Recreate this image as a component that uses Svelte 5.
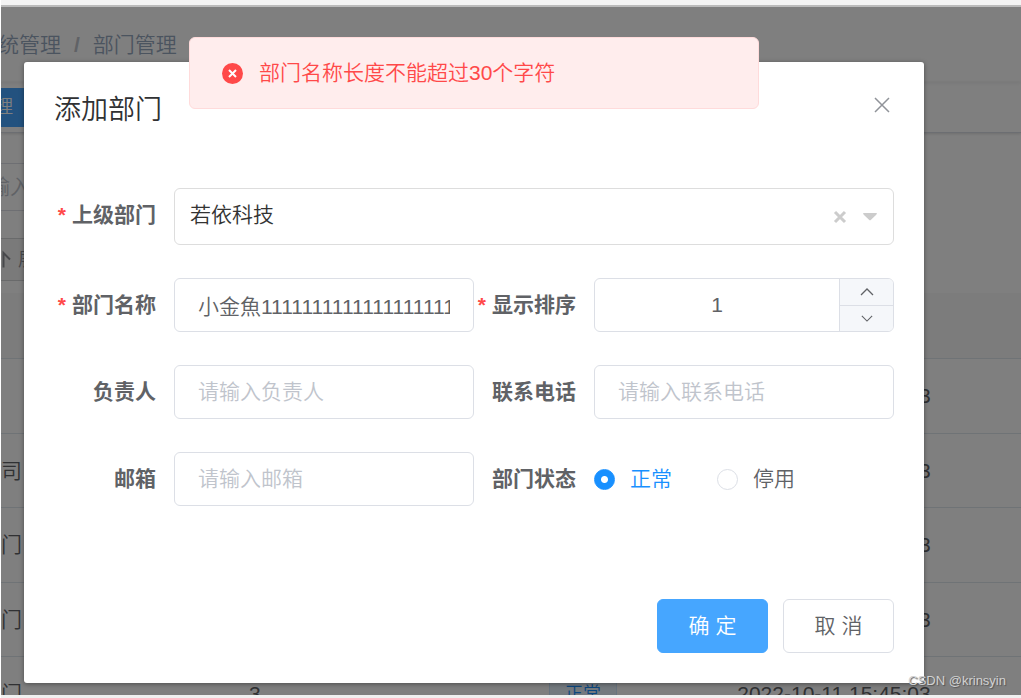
<script lang="ts">
	type Row = { name?: string; order?: number; status?: string; created: string };

	const rows: Row[] = [
		{ created: '2022-10-11 15:45:03' },
		{ name: '司', created: '2022-10-11 15:45:03' },
		{ name: '门', created: '2022-10-11 15:45:03' },
		{ name: '门', created: '2022-10-11 15:45:03' },
		{ name: '门', order: 3, status: '正常', created: '2022-10-11 15:45:03' }
	];

	let form = $state({
		parent: '若依科技',
		name: '小金魚' + '1'.repeat(28),
		order: 1,
		leader: '',
		phone: '',
		email: '',
		status: '0'
	});
</script>

<div class="window">
	<div class="browser-edge"></div>
	<div class="app">
		<div class="page">
			<nav class="navbar">
				<a href="#system">统管理</a>
				<span class="slash">/</span>
				<a href="#dept">部门管理</a>
			</nav>
			<div class="tags-view">
				<a href="#dept" class="view-tag">理</a>
			</div>
			<div class="filter">
				<span class="filter-input">输入</span>
			</div>
			<div class="tools">
				<button type="button" class="expand">
					<svg viewBox="0 0 10 20" width="10" height="20">
						<path d="M2.500 17.500V3l6.500 6.500" />
					</svg>
					展
				</button>
			</div>
			<table>
				<colgroup>
					<col class="col-name" />
					<col class="col-order" />
					<col class="col-status" />
					<col class="col-time" />
					<col />
				</colgroup>
				<thead>
					<tr><th></th><th></th><th></th><th></th><th></th></tr>
				</thead>
				<tbody>
					{#each rows as row}
						<tr>
							<td class="name">{row.name}</td>
							<td>{row.order}</td>
							<td>
								{#if row.status}
									<span class="status">{row.status}</span>
								{/if}
							</td>
							<td class="time">{row.created}</td>
							<td></td>
						</tr>
					{/each}
				</tbody>
			</table>
		</div>

		<div class="overlay">
			<div class="dialog" role="dialog" aria-labelledby="dialog-title">
				<header class="dialog-header">
					<h1 id="dialog-title">添加部门</h1>
					<button type="button" class="close" aria-label="关闭">
						<svg viewBox="0 0 16 16" width="16" height="16">
							<path d="M1 1l14 14M15 1L1 15" />
						</svg>
					</button>
				</header>

				<form id="dept-form" class="dialog-body">
					<div class="item wide">
						<label class="required" for="parent">上级部门</label>
						<div class="tree-select">
							<select id="parent" bind:value={form.parent}>
								<option>若依科技</option>
							</select>
							<div class="select-icons">
								<svg viewBox="0 0 14 14" width="14" height="14">
									<path class="cross" d="M2 2l10 10M12 2l-10 10" />
								</svg>
								<svg viewBox="0 0 14 8" width="14" height="8">
									<path class="caret" d="M0 0.500Q0 0 1 0H13Q14 0 14 0.500Q14 1.200 8 6.800Q7 7.800 6 6.800Q0 1.200 0 0.500Z" />
								</svg>
							</div>
						</div>
					</div>
					<div class="item">
						<label class="required" for="name">部门名称</label>
						<input id="name" type="text" bind:value={form.name} />
					</div>
					<div class="item">
						<label class="required" for="order">显示排序</label>
						<div class="number">
							<input id="order" type="number" bind:value={form.order} />
							<div class="steps">
								<button type="button" aria-label="增加" onclick={() => form.order++}>
									<svg viewBox="0 0 14 8" width="14" height="8"><path d="M1 7l6-6 6 6" /></svg>
								</button>
								<button type="button" aria-label="减少" onclick={() => form.order--}>
									<svg viewBox="0 0 14 8" width="12" height="7"><path d="M1 1l6 6 6-6" /></svg>
								</button>
							</div>
						</div>
					</div>
					<div class="item">
						<label for="leader">负责人</label>
						<input id="leader" type="text" placeholder="请输入负责人" bind:value={form.leader} />
					</div>
					<div class="item">
						<label for="phone">联系电话</label>
						<input id="phone" type="text" placeholder="请输入联系电话" bind:value={form.phone} />
					</div>
					<div class="item">
						<label for="email">邮箱</label>
						<input id="email" type="text" placeholder="请输入邮箱" bind:value={form.email} />
					</div>
					<div class="item" role="radiogroup" aria-labelledby="status-label">
						<span class="label" id="status-label">部门状态</span>
						<div class="radios">
							<label class="radio">
								<input type="radio" name="status" value="0" bind:group={form.status} />
								<span>正常</span>
							</label>
							<label class="radio">
								<input type="radio" name="status" value="1" bind:group={form.status} />
								<span>停用</span>
							</label>
						</div>
					</div>
				</form>

				<footer class="dialog-footer">
					<button type="submit" form="dept-form" class="btn primary">确 定</button>
					<button type="button" class="btn">取 消</button>
				</footer>
			</div>
		</div>

		<div class="message" role="alert">
			<svg viewBox="0 0 21 21" width="21" height="21">
				<circle cx="10.500" cy="10.500" r="10.500" />
				<path d="M7 7l7 7M14 7l-7 7" />
			</svg>
			<p>部门名称长度不能超过30个字符</p>
		</div>
	</div>
	<div class="watermark">CSDN @krinsyin</div>
</div>

<style>
	:global(body) {
		margin: 0;
		background: #f0f0f0;
	}

	.window,
	.window * {
		box-sizing: border-box;
	}

	.window {
		position: relative;
		display: flex;
		flex-direction: column;
		height: 100vh;
		padding: 0 0 3px 1px;
		overflow: hidden;
		background: linear-gradient(to right, #fff 1px, #f0f0f0 1px);
		font-family: 'Liberation Sans', 'Noto Sans CJK SC', sans-serif;
		font-size: 21px;
		font-weight: 350;
		line-height: 24px;
		color: #606266;
	}

	.window input,
	.window select,
	.window button {
		margin: 0;
		font: inherit;
		color: inherit;
	}

	.browser-edge {
		flex: none;
		height: 7px;
		background: #f3f3f3;
		border-bottom: 2px solid #bbb;
	}

	.app {
		position: relative;
		flex: 1;
		min-height: 0;
		overflow: hidden;
		background: #fff;
	}

	a {
		color: inherit;
		text-decoration: none;
	}

	.navbar {
		display: flex;
		align-items: center;
		height: 75px;
		margin-left: -3px;
		color: #97a8be;
		box-shadow: 0 1px 4px rgba(0, 21, 41, 0.08);
	}

	.slash {
		margin: 0 13px;
		font-weight: 700;
		color: #c0c4cc;
	}

	.tags-view {
		display: flex;
		align-items: center;
		height: 51px;
		border-bottom: 1px solid #d8dce5;
		box-shadow: 0 1px 3px rgba(0, 0, 0, 0.12), 0 0 3px rgba(0, 0, 0, 0.04);
	}

	.view-tag {
		width: 32px;
		height: 39px;
		margin-left: -6px;
		background: #46a4ff;
		color: #fff;
		font-size: 18px;
		line-height: 39px;
	}

	.filter {
		padding-top: 30px;
	}

	.filter-input {
		display: block;
		width: 300px;
		height: 48px;
		border: 1px solid #dcdfe6;
		border-left: 0;
		color: #c0c4cc;
		line-height: 46px;
		text-indent: -12px;
	}

	.tools {
		padding: 27px 0 12px;
	}

	.expand {
		display: flex;
		align-items: center;
		gap: 7px;
		width: 80px;
		height: 43px;
		padding: 0;
		border: 1px solid #d3d4d6;
		border-left: 0;
		background: #f4f4f5;
	}

	.window .expand {
		color: #909399;
		font-size: 18px;
	}

	.expand path {
		fill: none;
		stroke: #909399;
		stroke-width: 2;
	}

	table {
		width: 100%;
		border-collapse: separate;
		border-spacing: 0;
		table-layout: fixed;
	}

	.col-name {
		width: 233px;
	}

	.col-order,
	.col-time {
		width: 300px;
	}

	.col-status {
		width: 150px;
	}

	th {
		height: 66px;
		background: #f8f8f9;
	}

	th,
	td {
		padding: 0 15px;
		border-bottom: 1px solid #dfe6ec;
	}

	td {
		height: 75px;
	}

	tr:nth-child(even) td {
		height: 74px;
	}

	td.name {
		padding: 0;
	}

	td.time {
		padding: 0;
		text-align: center;
	}

	.status {
		display: inline-block;
		height: 36px;
		padding: 0 15px;
		border: 1px solid #d1e9ff;
		border-radius: 6px;
		background: #e8f4ff;
		color: #1890ff;
		font-size: 18px;
		line-height: 34px;
		vertical-align: middle;
	}

	.overlay {
		position: absolute;
		inset: 0;
		padding: 55px 97px 0 23px;
		background: rgba(0, 0, 0, 0.5);
	}

	.dialog {
		border-radius: 3px;
		background: #fff;
		box-shadow: 0 1px 5px rgba(0, 0, 0, 0.4);
	}

	.dialog-header {
		display: flex;
		align-items: flex-start;
		justify-content: space-between;
		padding: 30px 30px 15px;
	}

	h1 {
		margin: 0;
		color: #303133;
		font-size: 27px;
		font-weight: inherit;
		line-height: 36px;
	}

	.close {
		display: flex;
		padding: 5px 4px;
		border: 0;
		background: none;
	}

	.close path {
		fill: none;
		stroke: #909399;
		stroke-width: 1.500;
	}

	.dialog-body {
		display: grid;
		grid-template-columns: 1fr 1fr;
		row-gap: 33px;
		padding: 45px 30px 78px;
	}

	.item {
		display: flex;
		min-width: 0;
	}

	.wide {
		grid-column: 1 / -1;
	}

	.item > label,
	.label {
		flex: none;
		width: 120px;
		padding-right: 18px;
		font-weight: 700;
		line-height: 54px;
		text-align: right;
		white-space: nowrap;
	}

	.required::before {
		content: '*';
		margin-right: 6px;
		color: #ff4949;
	}

	.item > input,
	.number,
	.tree-select {
		flex: 1;
		min-width: 0;
		height: 54px;
		border: 1px solid #dcdfe6;
		border-radius: 6px;
		background: #fff;
	}

	.item > input {
		padding: 0 23px;
	}

	input::placeholder {
		color: #c0c4cc;
		opacity: 1;
	}

	.tree-select {
		position: relative;
		height: 57px;
		border-color: #ddd;
	}

	.tree-select select {
		width: 100%;
		height: 52px;
		padding: 0 60px 0 15px;
		border: 0;
		appearance: none;
		background: none;
		color: #333;
	}

	.select-icons {
		position: absolute;
		top: 0;
		right: 16px;
		bottom: 0;
		display: flex;
		align-items: center;
		gap: 16px;
		pointer-events: none;
	}

	.cross {
		fill: none;
		stroke: #ccc;
		stroke-width: 3;
	}

	.caret {
		fill: #ccc;
	}

	.number {
		display: flex;
		overflow: hidden;
	}

	.number input {
		flex: 1;
		min-width: 0;
		padding: 0;
		border: 0;
		background: none;
		text-align: center;
		appearance: textfield;
	}

	.number input::-webkit-inner-spin-button {
		display: none;
	}

	.steps {
		display: grid;
		grid-template-rows: 27px 1fr;
		width: 54px;
		border-left: 1px solid #dcdfe6;
	}

	.steps button {
		display: flex;
		align-items: center;
		justify-content: center;
		padding: 0;
		border: 0;
		background: #f5f7fa;
	}

	.steps button:first-child {
		border-bottom: 1px solid #dcdfe6;
	}

	.steps path {
		fill: none;
		stroke: #606266;
		stroke-width: 1.300;
	}

	.radios {
		display: flex;
		align-items: center;
		gap: 45px;
	}

	.radio {
		display: flex;
		align-items: center;
		gap: 15px;
	}

	.radio input {
		appearance: none;
		width: 21px;
		height: 21px;
		border: 1px solid #dcdfe6;
		border-radius: 50%;
		background: #fff;
	}

	.radio input:checked {
		border-color: #1890ff;
		background: radial-gradient(circle, #fff 3px, #1890ff 4px);
	}

	.radio input:checked + span {
		color: #1890ff;
	}

	.dialog-footer {
		display: flex;
		justify-content: flex-end;
		gap: 15px;
		padding: 15px 30px 30px;
	}

	.btn {
		min-width: 111px;
		height: 54px;
		padding: 0 30px;
		border: 1px solid #dcdfe6;
		border-radius: 6px;
		background: #fff;
	}

	.window .primary {
		border-color: #46a6ff;
		background: #46a6ff;
		color: #fff;
	}

	.message {
		position: absolute;
		top: 30px;
		left: 188px;
		display: flex;
		align-items: center;
		gap: 16px;
		width: 570px;
		height: 72px;
		padding: 0 32px;
		border: 1px solid #ffdbdb;
		border-radius: 6px;
		background: #ffeded;
		color: #ff4949;
	}

	.message p {
		margin: 0;
	}

	.message circle {
		fill: #ff4949;
	}

	.message path {
		fill: none;
		stroke: #fff;
		stroke-width: 2;
	}

	.watermark {
		position: absolute;
		right: 15px;
		bottom: 9px;
		color: #d2d2d2;
		font-size: 13px;
		line-height: 16px;
		text-shadow: 1px 1px 1px #555;
	}
</style>
